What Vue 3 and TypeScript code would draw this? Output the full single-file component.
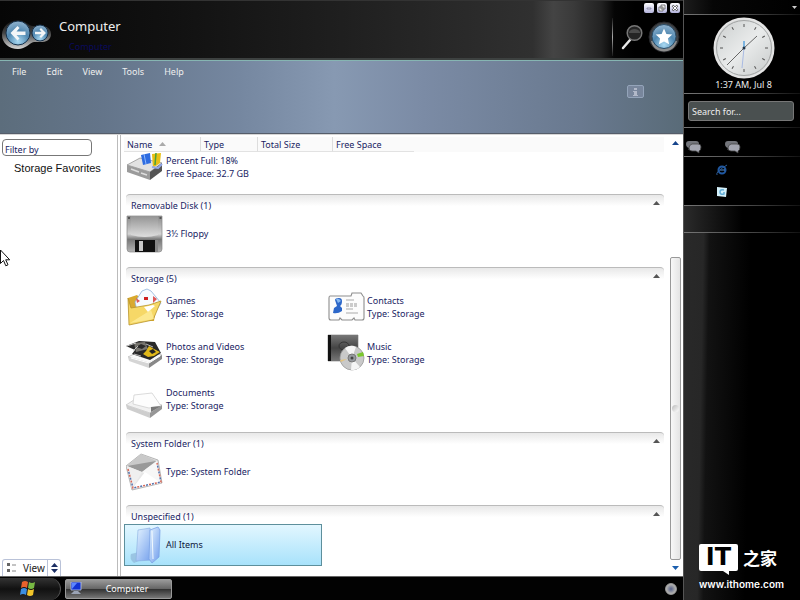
<script setup lang="ts">
import { ref } from 'vue'

type IconName = 'drive' | 'floppy' | 'games' | 'contacts' | 'photos' | 'music' | 'documents' | 'mail' | 'folder'

interface Item {
  icon: IconName
  lines: string[]
}

interface Group {
  title: string
  items: Item[]
}

const menus: string[] = ['File', 'Edit', 'View', 'Tools', 'Help']

const drive: Group = {
  title: '',
  items: [{ icon: 'drive', lines: ['Percent Full: 18%', 'Free Space: 32.7 GB'] }],
}

const groups: Group[] = [
  drive,
  { title: 'Removable Disk (1)', items: [{ icon: 'floppy', lines: ['3½ Floppy'] }] },
  {
    title: 'Storage (5)',
    items: [
      { icon: 'games', lines: ['Games', 'Type: Storage'] },
      { icon: 'contacts', lines: ['Contacts', 'Type: Storage'] },
      { icon: 'photos', lines: ['Photos and Videos', 'Type: Storage'] },
      { icon: 'music', lines: ['Music', 'Type: Storage'] },
      { icon: 'documents', lines: ['Documents', 'Type: Storage'] },
    ],
  },
  { title: 'System Folder (1)', items: [{ icon: 'mail', lines: ['Type: System Folder'] }] },
  { title: 'Unspecified (1)', items: [{ icon: 'folder', lines: ['All Items'] }] },
]

const selected = ref<IconName>('folder')
const filter = ref<string>('Filter by')
const search = ref<string>('')
const ticks: number[] = Array.from({ length: 12 }, (_, i) => i * 30)
</script>

<template>
  <div class="desktop">
    <div class="main">
      <header class="titlebar">
        <svg class="nav" viewBox="0 0 52 34" role="img" aria-label="Back and forward">
          <defs>
            <linearGradient id="navShell" x1="0" y1="0" x2="0" y2="1">
              <stop offset="0" stop-color="#111" />
              <stop offset=".45" stop-color="#444" />
              <stop offset="1" stop-color="#d8d8d8" />
            </linearGradient>
            <radialGradient id="orb" cx=".5" cy=".85" r=".9">
              <stop offset="0" stop-color="#a9d9f2" />
              <stop offset=".5" stop-color="#4f87b0" />
              <stop offset="1" stop-color="#9bb9d2" />
            </radialGradient>
          </defs>
          <path d="M18 3C9 3 2 10 2 18s7 14 16 14c8 0 11-6 16-7h8c6 0 9-4 9-8s-3-8-9-8h-9c-5 0-7-6-15-6z" fill="url(#navShell)" />
          <circle cx="18" cy="16" r="12" fill="url(#orb)" stroke="#17324c" />
          <circle cx="40" cy="16" r="8" fill="url(#orb)" stroke="#17324c" />
          <path d="M10.500 16l7-7 2 2-3 3.500h9v3.500h-9l3 3.500-2 2z" fill="#f4f6f8" />
          <path d="M46 16l-5-5-1.500 1.500 2 2.300H35v2.400h6.500l-2 2.300L41 21z" fill="#f4f6f8" />
        </svg>
        <div class="heading">
          <h1>Computer</h1>
          <a href="#computer">Computer</a>
        </div>
        <div class="title-tools">
          <div class="window-buttons">
            <button type="button" aria-label="Minimize">
              <svg viewBox="0 0 10 10"><path d="M3 5h4v1H3z" fill="#fff" stroke="#66668c" stroke-width=".6" /></svg>
            </button>
            <button type="button" aria-label="Restore">
              <svg viewBox="0 0 10 10"><path d="M4 2h4v4H4zM2 4h4v4H2z" fill="#eee" stroke="#555" stroke-width=".7" /></svg>
            </button>
            <button type="button" aria-label="Close">
              <svg viewBox="0 0 10 10"><path d="M2.500 2.500l5 5m0-5l-5 5" stroke="#666" stroke-width="2.200" /><path d="M3 3l4 4m0-4l-4 4" stroke="#fff" /></svg>
            </button>
          </div>
          <div class="title-actions">
            <button type="button" class="plain" aria-label="Search">
              <svg width="22" height="26" viewBox="0 0 22 26">
                <path d="M9 16L2 24" stroke="#e8e8e8" stroke-width="2.500" stroke-linecap="round" />
                <circle cx="13.500" cy="9" r="7.300" fill="#242424" stroke="#777" stroke-width="1.500" />
                <path d="M8 8c2-4 9-4 11 0v1H8z" fill="#4a4a4a" />
              </svg>
            </button>
            <button type="button" class="plain" aria-label="Favorites">
              <svg width="32" height="32" viewBox="0 0 32 32">
                <circle cx="16" cy="16" r="15" fill="#3f4246" stroke="#242528" />
                <path d="M3 20c3 14 23 14 26 0" fill="#8d8d8d" />
                <circle cx="16" cy="15.500" r="12" fill="url(#orb)" stroke="#284b66" />
                <path d="M16 7.500l2.400 5.400 5.900.6-4.400 4 1.200 5.800-5.100-2.900-5.100 2.900 1.200-5.800-4.400-4 5.900-.6z" fill="#fff" />
              </svg>
            </button>
          </div>
        </div>
      </header>

      <div class="band">
        <nav class="menu">
          <button v-for="m in menus" :key="m" type="button">{{ m }}</button>
        </nav>
        <button type="button" class="info" aria-label="Information">
          <svg width="17" height="12" viewBox="0 0 17 12"><path d="M7 2h3v2H7zM7 5h3v4h1v1H6V9h1V6H6V5z" fill="#b2b9c9" /></svg>
        </button>
      </div>

      <div class="content">
        <aside class="side">
          <input v-model="filter" class="filter" type="text" aria-label="Filter by" />
          <p>Storage Favorites</p>
          <div class="view">
            <button type="button" class="view-main">
              <svg width="10" height="10" viewBox="0 0 10 10">
                <path d="M0 0h3v3H0zM0 6h3v3H0z" fill="#666" />
                <path d="M5 2h4M5 8h4" stroke="#888" />
              </svg>
              View
            </button>
            <button type="button" class="view-step" aria-label="Change view">
              <svg width="7" height="10" viewBox="0 0 7 10"><path d="M3.500 0L7 4H0zM3.500 10L7 6H0z" fill="#1c2f63" /></svg>
            </button>
          </div>
        </aside>

        <main class="pane">
          <div class="listing">
            <div class="columns">
              <button type="button" class="col-name">
                Name
                <svg width="7" height="4" viewBox="0 0 7 4"><path d="M3.500 0L7 4H0z" fill="#aaa" /></svg>
              </button>
              <button type="button" class="col-type">Type</button>
              <button type="button" class="col-total">Total Size</button>
              <button type="button" class="col-free">Free Space</button>
            </div>

            <section v-for="g in groups" :key="g.title" class="group" :class="{ partial: !g.title }">
              <h2 v-if="g.title">
                {{ g.title }}
                <svg width="7" height="4" viewBox="0 0 7 4"><path d="M3.500 0L7 4H0z" fill="#555" /></svg>
              </h2>
              <div class="items">
                <button
                  v-for="it in g.items"
                  :key="it.icon"
                  type="button"
                  class="item"
                  :class="{ selected: selected === it.icon }"
                  @click="selected = it.icon"
                >
                  <svg class="icon" viewBox="0 0 38 38">
                    <g v-if="it.icon === 'drive'">
                      <path d="M1 17L14 10l22 5-12 9z" fill="#e2e2e2" stroke="#888" stroke-width=".7" />
                      <path d="M1 17l23 7v8L1 24z" fill="#9b9b9b" />
                      <path d="M24 24l12-9v8l-12 9z" fill="#555" />
                      <path d="M5 21l8 3m2 1l6 2" stroke="#ddd" stroke-width="1.500" />
                      <path d="M15 7l9-2 1 10-8 2z" fill="#2e6ce0" />
                      <path d="M18 6l2 10" stroke="#8cb8ff" />
                      <path d="M26 6l9-1-1 10-7 5z" fill="#e8bf14" />
                      <path d="M30 5l-1 12" stroke="#4aa23a" stroke-width="1.500" fill="none" />
                      <path d="M26 19l6 1 4-4" stroke="#93a8e8" stroke-width="2" fill="none" />
                    </g>
                    <g v-else-if="it.icon === 'floppy'">
                      <defs>
                        <linearGradient id="metal" x1="0" y1="0" x2="0" y2="1">
                          <stop offset="0" stop-color="#8a8a8a" /><stop offset=".5" stop-color="#d4d4d4" /><stop offset=".65" stop-color="#777" /><stop offset="1" stop-color="#b5b5b5" />
                        </linearGradient>
                        <linearGradient id="plate" x1="0" y1="0" x2="0" y2="1">
                          <stop offset="0" stop-color="#949494" /><stop offset="1" stop-color="#dedede" />
                        </linearGradient>
                      </defs>
                      <path d="M1 1h35v33q0 3-3 3H4q-3 0-3-3z" fill="url(#metal)" stroke="#888" stroke-width=".7" />
                      <path d="M5 1h27v19q-13 4-27 0z" fill="url(#plate)" />
                      <path d="M2 2h2v2h-2zM33.500 2h2v2h-2z" fill="#555" />
                      <path d="M9 25h21v12H9z" fill="#111" />
                      <path d="M13 26h4v10h-4z" fill="#c8c8c8" />
                      <path d="M29 25h3v12h-3z" fill="#888" />
                    </g>
                    <g v-else-if="it.icon === 'games'">
                      <path d="M2 10l9-3 4 4 16 2-3 20H4z" fill="#d9a92f" />
                      <path d="M9 14L16 3l5-2 4 2 10 12-8 12H12z" fill="#f7fbff" stroke="#8fb2da" stroke-width=".8" />
                      <path d="M18 9h4v3h-4z" fill="#cf2020" />
                      <path d="M10 10l4 3-3 2zM27 8l4 3-4 4z" fill="#dd5858" />
                      <path d="M2 10l3 10 18-3 12-4-8 19-24 5z" fill="#f6d867" stroke="#b8932a" stroke-width=".8" />
                      <path d="M18 19l9-2 2 1-7 6z" fill="#fff" />
                      <path d="M4 35L25 22l3 9z" fill="#fff0a1" opacity=".7" />
                    </g>
                    <g v-else-if="it.icon === 'contacts'">
                      <path d="M3 8h21l1-3h9l2 3q1 0 1 2v20q0 2-2 2h-7l-1-2-2 2H15l-2-2-1 2H4q-2 0-2-2V10q0-2 1-2z" fill="#fcfcfc" stroke="#8d8d8d" stroke-width="1.100" />
                      <path d="M8 12q0-2 4-2 3 0 3 3 0 4-2 5l2 2v3q-4 3-9 2l1-5 3-2z" fill="#2c67c9" />
                      <path d="M9 11q3-1 5 2l-3 2z" fill="#86b9f2" />
                      <path d="M19 12h8M19 21h7M19 25h12" stroke="#aaa" />
                      <path d="M19 16h12M19 18h12" stroke="#bbb" stroke-width="1.500" stroke-dasharray="3 1" />
                    </g>
                    <g v-else-if="it.icon === 'photos'">
                      <path d="M2 23l14-7 20 5-13 8z" fill="#fafafa" stroke="#aaa" stroke-width=".6" />
                      <path d="M2 23l21 6v5L3 27z" fill="#d5d5d5" />
                      <path d="M23 29l13-8v4l-13 9z" fill="#888" />
                      <path d="M5 24l18 5 11-7" fill="none" stroke="#fff" />
                      <path d="M0 12L13 7l16 1 6 11-11 7-18-6 3-4z" fill="#292929" />
                      <path d="M8 9l11-1 3 7-12 3z" fill="#77756f" />
                      <path d="M10 13l5-3 5 2-4 3z" fill="#2b2b2b" />
                      <path d="M17 20l3-3 3-5 5 3 6 3-6 4-6 1z" fill="#e0b81a" />
                      <path d="M23 17l4-2 3 3-4 2z" fill="#222" />
                      <path d="M1 12l9-3M7 17l5-5M20 10l7 3M8 20l7 2" stroke="#ddd" stroke-width=".8" />
                    </g>
                    <g v-else-if="it.icon === 'music'">
                      <defs>
                        <linearGradient id="jewel" x1="0" y1="0" x2="0" y2="1">
                          <stop offset="0" stop-color="#777" /><stop offset=".5" stop-color="#444" /><stop offset="1" stop-color="#777" />
                        </linearGradient>
                      </defs>
                      <path d="M1 1h30v26H1z" fill="url(#jewel)" stroke="#777" stroke-width=".6" />
                      <path d="M1 1h3v26H1z" fill="#111" />
                      <ellipse cx="17" cy="12" rx="5" ry="4" fill="none" stroke="#333" />
                      <circle cx="25" cy="24" r="12" fill="#c9c9c9" stroke="#999" stroke-width=".8" />
                      <path d="M25 24L18 14q6-4 11-1zM25 24l8 9q-4 4-9 3z" fill="#f5f5f5" />
                      <path d="M30 20l6-2 1 4-6 1z" fill="#7bc72c" />
                      <path d="M20 25l-6 3-1-2z" fill="#e1c382" />
                      <circle cx="25" cy="24" r="4" fill="#96999e" stroke="#777" />
                      <circle cx="25" cy="24" r="1.500" fill="#444" />
                    </g>
                    <g v-else-if="it.icon === 'documents'">
                      <path d="M0 25l11-7 25 7-12 8z" fill="#f1f1f1" stroke="#bbb" stroke-width=".6" />
                      <path d="M0 25l24 8v5L1 29z" fill="#cecece" />
                      <path d="M24 33l12-8v4l-12 9z" fill="#969696" />
                      <path d="M8 15l18-2 9 13-12 2-16-4z" fill="#fdfdfd" stroke="#ccc" stroke-width=".7" />
                      <path d="M25 27l10-1-10 6z" fill="#777" />
                    </g>
                    <g v-else-if="it.icon === 'mail'">
                      <path d="M0 13L15 1l17 6 4 23-30 7z" fill="#e7e7e7" stroke="#999" stroke-width=".7" />
                      <path d="M1 13L15 1l16 7-15 10z" fill="#c9c9c9" />
                      <path d="M1 13l29-5-14 11z" fill="#999" />
                      <path d="M1 13l15 6L6 36z" fill="#efefef" />
                      <path d="M16 19L31 8l4 22z" fill="#f7f7f7" />
                      <path d="M6 36l13-17 16 11z" fill="#fff" />
                      <path d="M2 16l5 19 28-6-4-19" fill="none" stroke="#d86757" stroke-width="1.500" stroke-dasharray="2 4" />
                      <path d="M2 16l5 19 28-6-4-19" fill="none" stroke="#5472ad" stroke-width="1.500" stroke-dasharray="2 4" stroke-dashoffset="3" />
                    </g>
                    <g v-else>
                      <defs>
                        <linearGradient id="blueFolder" x1="0" y1="0" x2="1" y2="1">
                          <stop offset="0" stop-color="#e5f4ff" /><stop offset="1" stop-color="#6f9cec" />
                        </linearGradient>
                      </defs>
                      <path d="M5 28l8-2 2 8-7 3q-5-4-3-9z" fill="#8fb7d8" opacity=".7" />
                      <path d="M12 4l12-2 3 32-17 1z" fill="url(#blueFolder)" stroke="#86acdf" stroke-width=".6" />
                      <path d="M24 4l8-3 2 3-1 27-7 6-3-4z" fill="url(#blueFolder)" stroke="#7ba3e6" stroke-width=".8" />
                      <path d="M26 5l1 28" stroke="#f1f9ff" />
                    </g>
                  </svg>
                  <span class="text"><span v-for="l in it.lines" :key="l">{{ l }}</span></span>
                </button>
              </div>
            </section>
          </div>

          <div class="scrollbar">
            <button type="button" aria-label="Scroll up">
              <svg width="7" height="4" viewBox="0 0 7 4"><path d="M3.500 0L7 4H0z" fill="#16448c" /></svg>
            </button>
            <div class="track">
              <div class="thumb"><i></i></div>
            </div>
            <button type="button" aria-label="Scroll down">
              <svg width="7" height="4" viewBox="0 0 7 4"><path d="M3.500 4L7 0H0z" fill="#1b5fae" /></svg>
            </button>
          </div>
        </main>
      </div>

      <footer class="taskbar">
        <button type="button" class="start" aria-label="Start">
          <svg width="17" height="17" viewBox="0 0 17 17">
            <path d="M3 2q3-2 6 0L8 8Q5 6 2 8z" fill="#e8622c" />
            <path d="M10 2q3 2 6 0l-1 6q-3 2-6 0z" fill="#78b843" />
            <path d="M2 9q3-2 6 0l-1 6q-3-2-6 0z" fill="#3c8ee0" />
            <path d="M9 9q3 2 6 0l-1 6q-3 2-6 0z" fill="#f2c52a" />
          </svg>
        </button>
        <button type="button" class="task">
          <svg width="14" height="13" viewBox="0 0 14 13">
            <path d="M2 0h10v8H2z" fill="#1232d2" stroke="#bcc8e8" stroke-width=".8" />
            <path d="M3 1h5L3 7z" fill="#5d86ff" />
            <path d="M5 9h4l3 3H2z" fill="#9aa3b5" />
          </svg>
          <span>Computer</span>
        </button>
        <button type="button" class="tray" aria-label="Notifications"></button>
      </footer>
    </div>

    <aside class="gadgets">
      <div class="cell top">
        <button type="button" class="plain" aria-label="Sidebar options">
          <svg width="5" height="3" viewBox="0 0 5 3"><path d="M0 0h5L2.500 3z" fill="#ccc" /></svg>
        </button>
      </div>
      <div class="cell clock">
        <svg viewBox="0 0 62 62" role="img" aria-label="Clock">
          <defs>
            <linearGradient id="dial" x1="0" y1="0" x2="1" y2="1">
              <stop offset="0" stop-color="#c9cccc" /><stop offset=".5" stop-color="#e9ebeb" /><stop offset="1" stop-color="#c5c8c8" />
            </linearGradient>
          </defs>
          <circle cx="31" cy="31" r="29.500" fill="url(#dial)" stroke="#e4e4e4" stroke-width="2" />
          <circle cx="31" cy="31" r="27.500" fill="none" stroke="#a2a4a4" />
          <path v-for="t in ticks" :key="t" d="M31 7v3" stroke="#555" :transform="`rotate(${t} 31 31)`" />
          <path d="M31 31L14 48M31 31L44 19" stroke="#666" />
          <path d="M31 24v8" stroke="#5aa3de" stroke-width="1.500" />
          <path d="M31 31l-2 20" stroke="#a9bbe3" />
          <circle cx="31" cy="31" r="1.500" fill="#234" />
        </svg>
        <time>1:37 AM, Jul 8</time>
      </div>
      <div class="cell find">
        <input v-model="search" type="search" placeholder="Search for..." aria-label="Search for" />
      </div>
      <div class="cell chats">
        <svg v-for="n in 2" :key="n" width="16" height="14" viewBox="0 0 16 14">
          <path d="M3 1h7q3 0 3 3T10 8H5L2 10 3 8Q0 7 0 4t3-3z" fill="#73757b" />
          <path d="M6 4h6q3 0 3 3t-2 4v2l-3-2H6q-3 0-3-3t3-4z" fill="#a3a5b0" stroke="#444" stroke-width=".8" />
        </svg>
      </div>
      <div class="cell links">
        <a href="#browser" aria-label="Browser">
          <svg width="12" height="12" viewBox="0 0 12 12">
            <circle cx="6" cy="6" r="3.500" fill="none" stroke="#2059a3" stroke-width="2" />
            <path d="M4 6h5" stroke="#5a92d0" />
            <path d="M1 11Q-1 8 11 1" stroke="#2c5c96" fill="none" />
          </svg>
        </a>
        <a href="#mail" aria-label="Mail">
          <svg width="12" height="12" viewBox="0 0 12 12">
            <path d="M1 1l10 1-1 9-9-1z" fill="#d5f1fb" />
            <path d="M8 4q-4-1-4 2t4 2V6" stroke="#62aed8" fill="none" stroke-width="1.500" />
          </svg>
        </a>
      </div>
      <div class="cell blank"></div>
      <div class="rest">
        <div class="brand">
          <div class="logo"><b>IT</b><span lang="zh">之家</span></div>
          <a href="#ithome">www.ithome.com</a>
        </div>
      </div>
    </aside>

    <svg class="pointer" width="12" height="18" viewBox="0 0 12 18" aria-hidden="true">
      <path d="M.500 1v13.500l3-3 2.300 5.300 2.200-1-2.300-5h4z" fill="#fff" stroke="#111" />
    </svg>
  </div>
</template>

<style>
body {
  margin: 0;
  background: #000;
}
</style>

<style scoped>
.desktop {
  position: relative;
  box-sizing: border-box;
  display: grid;
  grid-template-columns: minmax(0, 1fr) 117px;
  min-height: 100vh;
  font-family: 'Noto Sans', 'Open Sans', sans-serif;
  font-size: 9px;
  color: #191d63;
}

.desktop *,
.desktop *::before {
  box-sizing: border-box;
}

button,
input {
  margin: 0;
  padding: 0;
  border: 0;
  background: none;
  font: inherit;
  color: inherit;
}

button {
  display: flex;
  align-items: center;
}

svg {
  display: block;
  flex: none;
}

a {
  color: inherit;
  text-decoration: none;
}

.main {
  display: flex;
  flex-direction: column;
}

.titlebar {
  flex: none;
  display: flex;
  height: 60px;
  border-top: 1px solid #333;
  border-bottom: 2px solid #3d4140;
  background: linear-gradient(90deg, #060606 0, #111 25%, #1f1f1f 50%, #2b2b2b 70%, #303030 78%, #444 81%, #3a3a3a 84%, #222 88%, #050505 90%, #000 93%);
}

.nav {
  width: 52px;
  height: 34px;
  margin-top: 16px;
}

.heading {
  flex: 1;
  padding: 15px 0 0 7px;
}

.heading h1 {
  margin: 0;
  font-size: 13px;
  line-height: 20px;
  font-weight: 400;
  color: #eee;
}

.heading a {
  display: block;
  padding: 4px 0 0 10px;
  line-height: 14px;
  color: #0a0a5c;
}

.title-tools {
  display: flex;
  flex-direction: column;
  align-items: flex-end;
  gap: 5px;
  padding: 2px 3px 0 0;
}

.window-buttons {
  display: flex;
  gap: 3px;
}

.window-buttons button {
  width: 10px;
  height: 10px;
  border-radius: 2px;
  background: linear-gradient(#fff, #b4b4dc);
}

.window-buttons svg {
  width: 10px;
  height: 10px;
}

.title-actions {
  display: flex;
  align-items: center;
  gap: 5px;
  height: 38px;
  padding-left: 8px;
  border-left: 1px solid;
  border-image: linear-gradient(#111, #aaa 50%, #111) 1;
}

.band {
  flex: none;
  display: flex;
  justify-content: space-between;
  height: 74px;
  border-top: 1px solid #86b5b2;
  border-bottom: 1px solid #555d6a;
  background: linear-gradient(90deg, #5c6d7c 0, #64758a 15%, #7587a0 35%, #8799b2 49%, #7b8ba5 62%, #69798f 85%, #596b78 100%);
}

.menu {
  display: flex;
  align-items: flex-start;
  gap: 20px;
  padding: 4px 0 0 12px;
  color: #eee;
}

.menu button {
  line-height: 14px;
}

.info {
  width: 17px;
  height: 13px;
  margin: 24px 39px 0 0;
  border: 1px solid #94a4ba;
  border-radius: 2px;
  background: #78869c;
  justify-content: center;
}

.content {
  flex: 1;
  display: flex;
  border-top: 1px solid #d5d5d5;
  background: #fff;
}

.side {
  display: flex;
  flex-direction: column;
  width: 121px;
  padding: 4px 0 0 2px;
  border-right: 4px double #bbb;
}

.filter {
  width: 90px;
  height: 17px;
  padding: 4px 2px 0;
  border: 1px solid #777;
  border-radius: 4px;
  line-height: 12px;
}

.side p {
  margin: 5px 0 0 12px;
  font: 11px/14px 'Liberation Sans', sans-serif;
  color: #111;
}

.view {
  display: flex;
  width: 59px;
  height: 17px;
  margin-top: auto;
  border: 1px solid #b9c2d8;
  border-bottom: 0;
  border-radius: 3px 3px 0 0;
  font-size: 10px;
  color: #222;
}

.view-main {
  flex: 1;
  gap: 6px;
  padding-left: 4px;
}

.view-step {
  width: 13px;
  justify-content: center;
  border-left: 1px solid #b9c2d8;
}

.pane {
  flex: 1;
  display: flex;
  min-width: 0;
  padding-right: 1px;
}

.listing {
  flex: 1;
  padding: 2px 5px 0 3px;
}

.columns {
  display: flex;
  height: 15px;
  background: #fafafa;
}

.columns button {
  padding: 0 0 0 3px;
  border-right: 1px solid #ddd;
  border-bottom: 1px solid #e2e2e2;
  gap: 7px;
}

.col-name {
  width: 77px;
}

.col-type {
  width: 57px;
}

.col-total {
  width: 75px;
}

.columns .col-free {
  width: 81px;
  border-right: 0;
}

.group {
  padding-bottom: 10px;
}

.group:last-child {
  padding-bottom: 0;
}

.group h2 {
  display: flex;
  align-items: center;
  justify-content: space-between;
  height: 17px;
  margin: 0 0 0 2px;
  padding: 5px 4px 0 5px;
  border-top: 1px solid #bbb;
  border-radius: 4px 4px 0 0;
  background: linear-gradient(#e8e8e8, #fff 70%);
  font-size: inherit;
  font-weight: 400;
}

.group h2 svg {
  margin-bottom: 6px;
}

.items {
  display: grid;
  grid-template-columns: repeat(auto-fill, 198px);
  gap: 4px 3px;
  padding: 2px 0;
}

.group.partial {
  padding-bottom: 12px;
}

.partial .items {
  padding: 0;
}

.item {
  height: 42px;
  padding: 0 1px 1px;
  border: 1px solid transparent;
  text-align: left;
}

.partial .item {
  height: 30px;
  overflow: hidden;
}

.item.selected {
  border-color: #5d8f9c;
  background: linear-gradient(#e2f6ff, #a8e2fb);
  color: #10183c;
}

.icon {
  width: 38px;
  height: 38px;
}

.text {
  display: flex;
  flex-direction: column;
  padding-left: 2px;
  line-height: 13px;
}

.scrollbar {
  display: flex;
  flex-direction: column;
  width: 13px;
}

.scrollbar button {
  height: 16px;
  justify-content: center;
}

.track {
  flex: 1;
  display: flex;
  flex-direction: column;
  justify-content: flex-end;
}

.thumb {
  display: flex;
  align-items: center;
  justify-content: center;
  height: 74%;
  margin: 0 1px;
  border: 1px solid #999;
  border-radius: 2px;
  background: linear-gradient(90deg, #f8f8f8, #e4e4e4);
}

.thumb i {
  width: 7px;
  height: 7px;
  border-radius: 50%;
  background: linear-gradient(135deg, #bbb, #fff);
}

.taskbar {
  flex: none;
  display: flex;
  align-items: center;
  gap: 4px;
  height: 24px;
  padding-right: 6px;
  border-top: 1px solid #666;
  background: #020202;
}

.start {
  width: 61px;
  height: 22px;
  padding-left: 19px;
  border-right: 1px solid #555;
  border-radius: 0 11px 11px 0;
  background: linear-gradient(#333, #111 50%, #292929);
}

.task {
  width: 107px;
  height: 20px;
  padding-left: 3px;
  border: 1px solid #999;
  border-radius: 2px;
  background: linear-gradient(#999, #666 48%, #333 52%, #777);
  color: #fff;
}

.task span {
  flex: 1;
  text-align: center;
}

.tray {
  width: 12px;
  height: 12px;
  margin-left: auto;
  border: 1px solid #999;
  border-radius: 50%;
  background: radial-gradient(circle at 50% 50%, #55608a, #aaa 60%, #ccc);
}

.gadgets {
  display: flex;
  flex-direction: column;
  border-left: 1px solid #555;
  background: #000;
  color: #eee;
}

.cell {
  flex: none;
  display: flex;
  border-bottom: 1px solid;
  border-image: linear-gradient(90deg, #777, #444 60%, #111) 1;
}

.top {
  height: 15px;
  justify-content: flex-end;
  padding-right: 3px;
  background: linear-gradient(90deg, #1c1c1c, #060606 25%, #000);
}

.clock {
  flex-direction: column;
  align-items: center;
  height: 79px;
  padding: 2px 0 0 3px;
}

.clock svg {
  width: 62px;
  height: 62px;
}

.clock time {
  line-height: 12px;
}

.find {
  height: 34px;
  padding: 7px 6px 5px 4px;
}

.find input {
  width: 100%;
  height: 20px;
  padding: 0 3px;
  border: 1px solid #777;
  border-radius: 3px;
  background: #4a5050;
  color: #eee;
}

.find input::placeholder {
  color: #eee;
  opacity: 1;
}

.chats {
  height: 29px;
  gap: 23px;
  padding: 12px 0 0 2px;
}

.links {
  flex-direction: column;
  gap: 10px;
  height: 49px;
  padding: 7px 0 0 32px;
}

.blank {
  height: 27px;
  background: linear-gradient(90deg, #2b2b2b, #000 50%);
}

.rest {
  flex: 1;
  display: flex;
  align-items: flex-end;
  justify-content: flex-end;
  padding: 0 16px 10px 0;
  background: linear-gradient(91deg, #292929, #272727 16%, #121212 21%, #000 55%);
}

.brand {
  display: flex;
  flex-direction: column;
  gap: 7px;
  font: 600 10px/12px 'Inter', sans-serif;
  color: #fff;
}

.logo {
  display: flex;
  align-items: center;
  gap: 5px;
}

.logo b {
  position: relative;
  width: 39px;
  height: 27px;
  border-radius: 2px;
  background: #fff;
  color: #000;
  font: bold 24px/27px 'DejaVu Sans', sans-serif;
  text-align: center;
}

.logo b::before {
  content: '';
  position: absolute;
  right: 9px;
  bottom: -4px;
  border-top: 4px solid #fff;
  border-left: 6px solid transparent;
}

.logo span {
  font: bold 17px/27px 'Noto Sans CJK SC', sans-serif;
}

.pointer {
  position: absolute;
  left: 0;
  top: 249px;
}
</style>
